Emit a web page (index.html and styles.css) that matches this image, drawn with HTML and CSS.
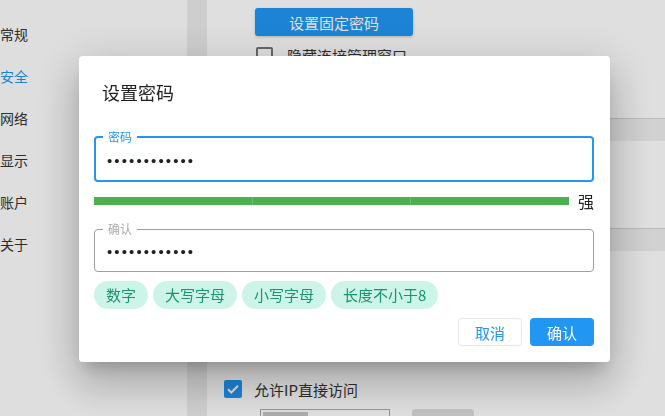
FILE: index.html
```
<!DOCTYPE html>
<html lang="zh-CN">
<head>
    <meta charset="UTF-8">
    <title>设置 - 安全</title>
    <link rel="stylesheet" href="styles.css">
</head>
<body>
    <div class="app">
        <ul class="nav">
            <li>常规</li>
            <li class="active">安全</li>
            <li>网络</li>
            <li>显示</li>
            <li>账户</li>
            <li>关于</li>
        </ul>
        <div class="gutter"></div>
        <div class="content">
            <button class="btn-fixed">设置固定密码</button>
            <label class="check-row first"><span class="box"></span>隐藏连接管理窗口</label>
            <div class="band"></div>
            <div class="band second"></div>
            <label class="check-row ip"><span class="box checked"><svg viewBox="0 0 18 18" width="18" height="18"><path d="M4 9.2l3.3 3.3L14 5.8" fill="none" stroke="#fff" stroke-width="2"/></svg></span>允许IP直接访问</label>
            <div class="ip-row">
                <div class="ip-input"><span class="fill"></span></div>
                <div class="ip-btn"></div>
            </div>
        </div>
    </div>

    <div class="overlay"></div>

    <div class="dialog">
        <h3 class="title">设置密码</h3>
        <fieldset class="field focused">
            <legend>密码</legend>
            <input type="password" value="123456789Abc">
        </fieldset>
        <div class="strength">
            <div class="bar"><span></span><span></span><span></span></div>
            <span class="level">强</span>
        </div>
        <fieldset class="field">
            <legend>确认</legend>
            <input type="password" value="123456789Abc">
        </fieldset>
        <div class="chips">
            <span class="chip">数字</span>
            <span class="chip">大写字母</span>
            <span class="chip">小写字母</span>
            <span class="chip">长度不小于8</span>
        </div>
        <div class="actions">
            <button class="btn cancel">取消</button>
            <button class="btn ok">确认</button>
        </div>
    </div>
</body>
</html>
```
FILE: styles.css
```
* { box-sizing: border-box; }
body { margin: 0; font-family: "Noto Sans CJK SC", "Noto Sans", sans-serif; color: #333; background: #fdfdfd; overflow: hidden; }

.app { display: flex; height: 416px; }
.nav { width: 187px; margin: 0; padding: 13px 0 0 0; list-style: none; background: #fdfdfd; font-size: 14px; }
.nav li { height: 42px; line-height: 42px; }
.nav li.active { color: #2196f3; }
.gutter { width: 20px; background: #ebebeb; }
.content { flex: 1; background: #fefefe; }

.btn-fixed { display: block; margin: 8px 0 0 48px; width: 158px; height: 28px; border: none; border-radius: 3px; background: #2196f3; color: #fff; font: 15px "Noto Sans CJK SC", sans-serif; box-shadow: 0 1px 3px rgba(0,0,0,0.2); }
.check-row { display: flex; align-items: center; font-size: 15px; }
.check-row.first { margin: 11px 0 0 49px; height: 17px; gap: 14px; }
.box { display: inline-block; width: 17px; height: 17px; border: 2px solid #757575; border-radius: 2px; }
.band { margin-top: 54px; height: 23px; border-top: 1px solid #d4d4d4; background: #eeeeee; }
.band.second { margin-top: 87px; }
.check-row.ip { margin: 129px 0 0 17px; height: 18px; gap: 12px; }
.box.checked { width: 18px; height: 18px; border: none; background: #2196f3; }
.box svg { display: block; }
.ip-row { display: flex; margin: 11px 0 0 53px; }
.ip-input { width: 130px; height: 22px; border: 1px solid #aaa; padding: 2px; }
.ip-input .fill { display: block; width: 45px; height: 6px; background: #c4c4c4; }
.ip-btn { margin-left: 22px; width: 62px; height: 22px; border-radius: 4px; background: #dcdcdc; }

.overlay { position: fixed; inset: 0; background: rgba(0, 0, 0, 0.12); }

.dialog { position: fixed; left: 79px; top: 56px; width: 531px; padding: 23px 16px 16px 15px; background: #fff; border-radius: 4px;
    box-shadow: 0 11px 15px -7px rgba(0,0,0,0.2), 0 24px 38px 3px rgba(0,0,0,0.14), 0 9px 46px 8px rgba(0,0,0,0.12); }
.title { margin: 0 0 25px 8px; font-size: 18px; font-weight: normal; line-height: 26px; color: #212121; }

.field { margin: 0; padding: 0 8px 4px 8px; border: 1px solid #9e9e9e; border-radius: 4px; height: 50px; }
.field legend { padding: 0 5px; font-size: 12px; line-height: 14px; color: #aaa; }
.field input { display: block; width: 100%; height: 31px; border: none; outline: none; padding: 0 0 0 4px; font: 15px "Liberation Sans", sans-serif; letter-spacing: 2.1px; color: #222; background: transparent; }
.field.focused { border: 2px solid #2196f3; height: 52px; padding: 0 7px 4px 7px; }
.field.focused legend { color: #2196f3; }
.field.focused input { height: 32px; }

.strength { display: flex; align-items: center; height: 20px; margin: 9px 0 11px 0; }
.bar { flex: 1; display: flex; gap: 1px; height: 8px; background: #6bbb72; }
.bar span { flex: 1; background: #4caf50; }
.level { width: 16px; margin-left: 9px; font-size: 16px; color: #212121; }

.chips { display: flex; gap: 5px; margin-top: 9px; }
.chip { height: 28px; line-height: 28px; padding: 0 12px; border-radius: 14px; background: #cdf4e9; color: #1b946c; font-size: 15px; }

.actions { display: flex; justify-content: flex-end; gap: 8px; margin-top: 9px; }
.btn { width: 64px; height: 28px; border-radius: 4px; font: 15px "Noto Sans CJK SC", sans-serif; cursor: pointer; }
.btn.cancel { background: #fff; border: 1px solid #e3e9ec; color: #2196f3; }
.btn.ok { background: #2196f3; border: none; color: #fff; }
```
